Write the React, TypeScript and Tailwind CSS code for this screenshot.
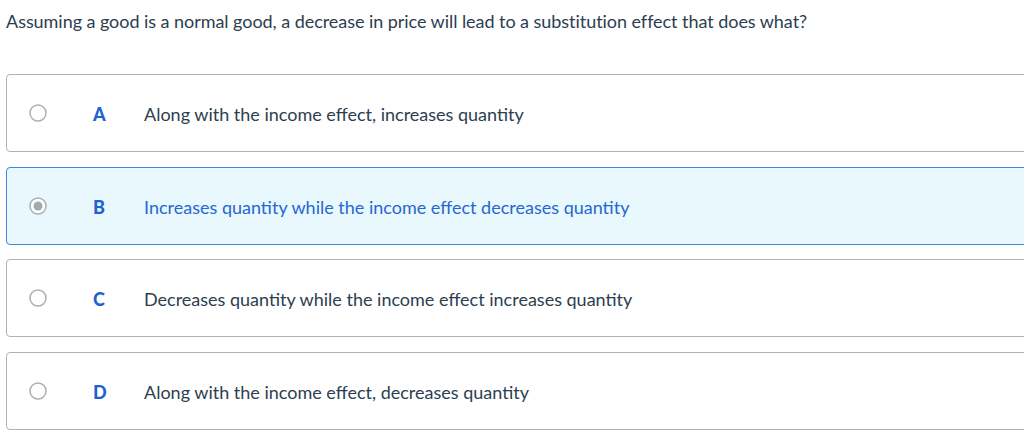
import { useState } from "react";

const OPTIONS = [
  { key: "A", text: "Along with the income effect, increases quantity" },
  { key: "B", text: "Increases quantity while the income effect decreases quantity" },
  { key: "C", text: "Decreases quantity while the income effect increases quantity" },
  { key: "D", text: "Along with the income effect, decreases quantity" },
];

function Radio({ checked }: { checked: boolean }) {
  return (
    <svg width="18" height="18" viewBox="0 0 18 18" className="shrink-0">
      <circle cx="9" cy="9" r="8" fill="#fff" stroke="#a9afb5" strokeWidth="1.5" />
      {checked && <circle cx="9" cy="9" r="4.5" fill="#a3a9af" />}
    </svg>
  );
}

export default function App() {
  const [selected, setSelected] = useState("B");

  return (
    <div
      className="w-[1024px] h-[443px] overflow-hidden bg-white text-[#2c3e50]"
      style={{ fontFamily: "Lato, 'Noto Sans', sans-serif" }}
    >
      <div className="pl-[6px] pt-[9px]">
        <p className="text-[18px] leading-[24px] tracking-[-0.05px]">
          Assuming a good is a normal good, a decrease in price will lead to a substitution effect that does what?
        </p>
        <div className="mt-[41px] flex flex-col gap-[14.67px] w-[1040px]">
          {OPTIONS.map((o) => {
            const active = o.key === selected;
            return (
              <button
                key={o.key}
                onClick={() => setSelected(o.key)}
                className={`flex items-center h-[78px] pl-[22px] rounded-[4px] border text-left ${
                  active ? "border-[#3f86e2] bg-[#e8f8fd]" : "border-[#aab3bb] bg-white"
                }`}
              >
                <Radio checked={active} />
                <span className="ml-[46px] mt-[3px] w-[51px] text-[18px] font-black text-[#1f63d1]">{o.key}</span>
                <span className={`mt-[3px] text-[18px] ${active ? "text-[#2767d1]" : "text-[#2c3e50]"}`}>{o.text}</span>
              </button>
            );
          })}
        </div>
      </div>
    </div>
  );
}
